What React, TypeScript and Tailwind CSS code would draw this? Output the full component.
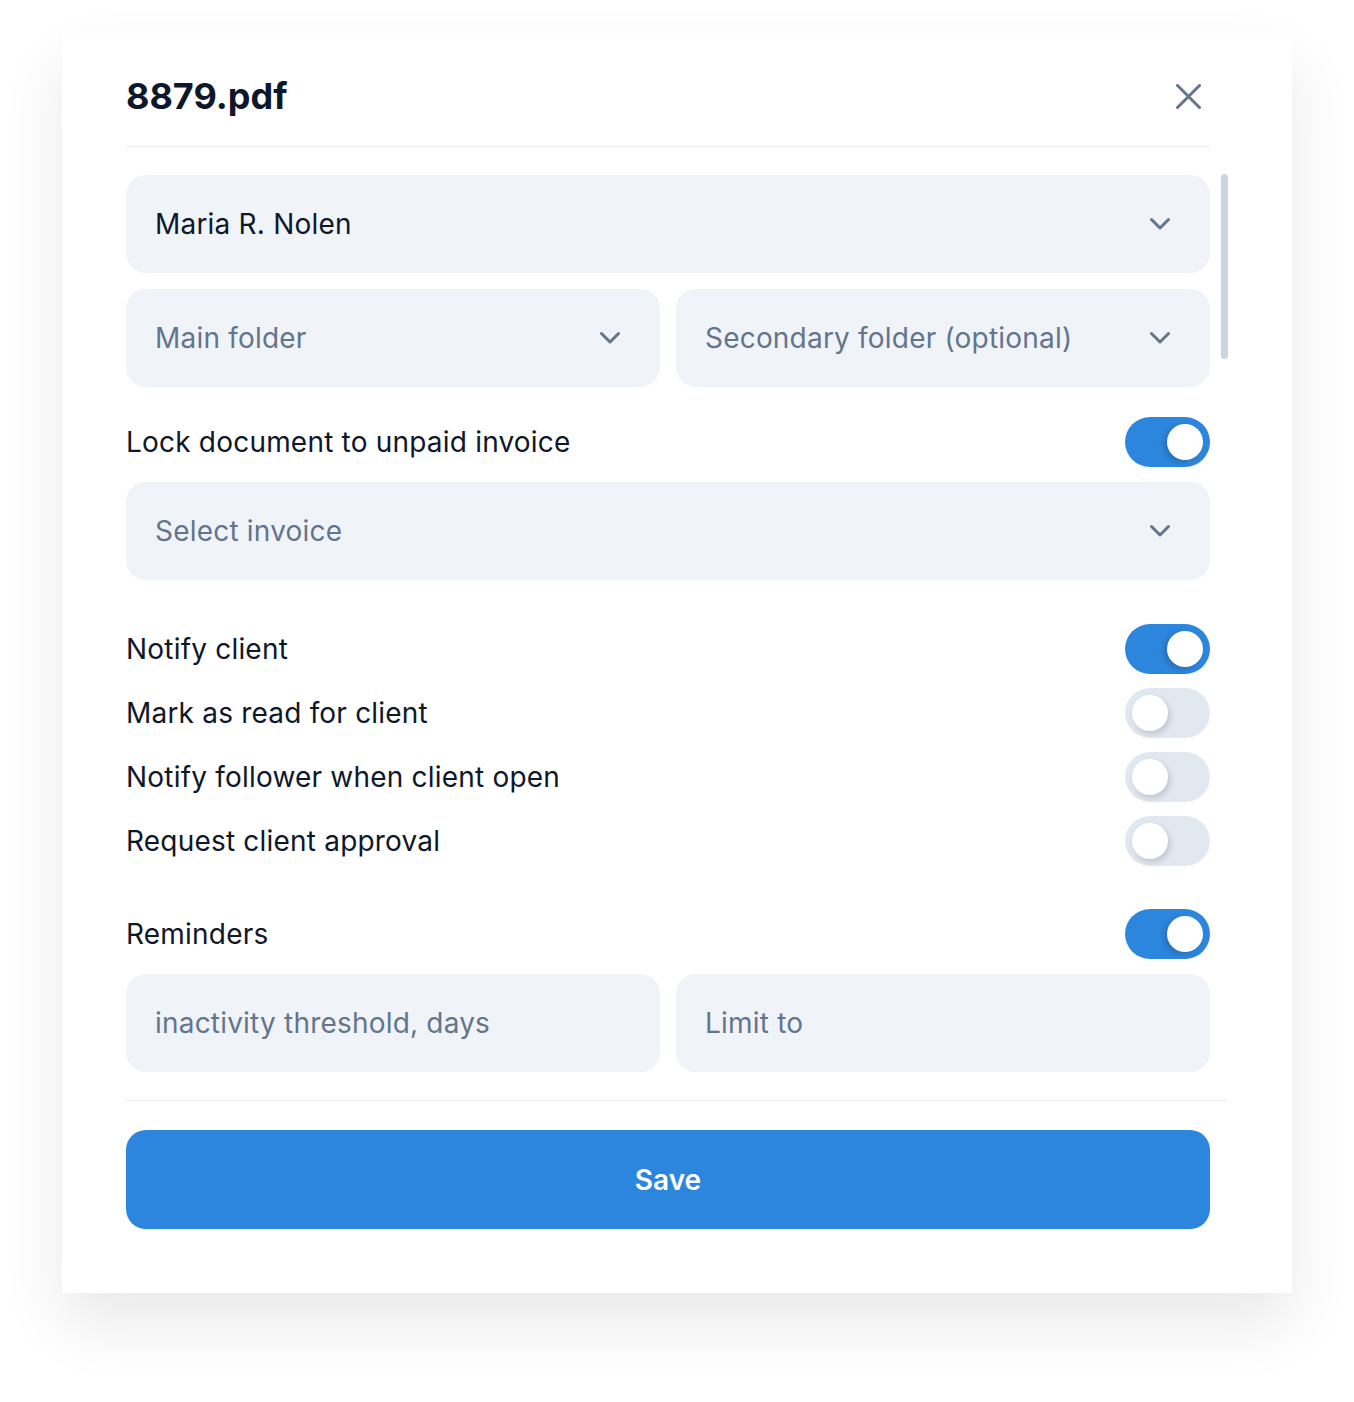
import React from "react";

function Chevron() {
  return (
    <svg width="22" height="14" viewBox="0 0 22 14" fill="none" className="shrink-0">
      <path d="M2.5 2.5L11 11L19.5 2.5" stroke="#64748b" strokeWidth="3" strokeLinecap="round" strokeLinejoin="round" />
    </svg>
  );
}

function Select({ label, filled = false }: { label: string; filled?: boolean }) {
  return (
    <div className="flex h-[98px] w-full items-center justify-between rounded-[20px] bg-[#f0f4f9] pl-[29px] pr-[39px]">
      <span
        className={
          filled
            ? "text-[28px] tracking-[0.2px] text-[#0f172a]"
            : "text-[28px] tracking-[0.2px] text-[#64748b]"
        }
      >
        {label}
      </span>
      <Chevron />
    </div>
  );
}

function Input({ placeholder }: { placeholder: string }) {
  return (
    <div className="flex h-[98px] w-full items-center rounded-[20px] bg-[#f0f4f9] px-[29px]">
      <span className="text-[28px] tracking-[0.2px] text-[#64748b]">{placeholder}</span>
    </div>
  );
}

function Toggle({ on }: { on: boolean }) {
  return (
    <div
      className={
        on
          ? "flex h-[50px] w-[85px] shrink-0 items-center justify-end rounded-full bg-[#2d86de] px-[7px]"
          : "flex h-[50px] w-[85px] shrink-0 items-center justify-start rounded-full bg-[#e2e8f0] px-[7px]"
      }
    >
      <div
        className={
          on
            ? "h-[36px] w-[36px] rounded-full bg-white shadow-[-3px_2px_6px_rgba(0,0,0,0.18)]"
            : "h-[36px] w-[36px] rounded-full bg-white shadow-[2px_3px_6px_rgba(0,0,0,0.16)]"
        }
      />
    </div>
  );
}

function ToggleRow({ label, on }: { label: string; on: boolean }) {
  return (
    <div className="flex h-[50px] items-center justify-between">
      <span className="text-[28px] tracking-[0.2px] text-[#0f172a]">{label}</span>
      <Toggle on={on} />
    </div>
  );
}

export default function App() {
  return (
    <div className="min-h-screen w-full bg-white pt-[34px] font-['Inter',sans-serif]">
      <div className="mx-auto w-[1230px] bg-white px-16 pb-16 pt-[38px] shadow-[0_30px_60px_rgba(0,0,0,0.09)]">
        {/* Header */}
        <div className="mr-[18px] flex h-[75px] items-start justify-between border-b border-[#e8edf4] pb-[27px]">
          <div className="flex h-12 items-center">
            <h1 className="text-[36px] font-bold leading-none text-[#0f172a]">8879.pdf</h1>
          </div>
          <button className="flex h-12 items-center pr-[9px]">
            <svg width="25" height="25" viewBox="0 0 25 25" fill="none">
              <path d="M1.5 1.5L23.5 23.5M23.5 1.5L1.5 23.5" stroke="#64748b" strokeWidth="3" strokeLinecap="round" />
            </svg>
          </button>
        </div>

        {/* Scroll area */}
        <div className="relative border-b border-[#e8edf4] pb-7 pr-[18px] pt-7">
          <div className="absolute right-0 top-[27px] h-[185px] w-[7px] rounded-full bg-[#cbd5e1]" />

          <Select label="Maria R. Nolen" filled />
          <div className="mt-4 grid grid-cols-2 gap-4">
            <Select label="Main folder" />
            <Select label="Secondary folder (optional)" />
          </div>

          <div className="mt-[30px]">
            <ToggleRow label="Lock document to unpaid invoice" on />
          </div>
          <div className="mt-[15px]">
            <Select label="Select invoice" />
          </div>

          <div className="mt-[44px] flex flex-col gap-[14px]">
            <ToggleRow label="Notify client" on />
            <ToggleRow label="Mark as read for client" on={false} />
            <ToggleRow label="Notify follower when client open" on={false} />
            <ToggleRow label="Request client approval" on={false} />
          </div>

          <div className="mt-[43px]">
            <ToggleRow label="Reminders" on />
          </div>
          <div className="mt-[15px] grid grid-cols-2 gap-4">
            <Input placeholder="inactivity threshold, days" />
            <Input placeholder="Limit to" />
          </div>
        </div>

        {/* Footer */}
        <button className="mr-[18px] mt-[29px] flex h-[99px] w-[1084px] items-center justify-center rounded-[20px] bg-[#2d86de]">
          <span className="text-[28px] font-semibold text-white">Save</span>
        </button>
      </div>
    </div>
  );
}
